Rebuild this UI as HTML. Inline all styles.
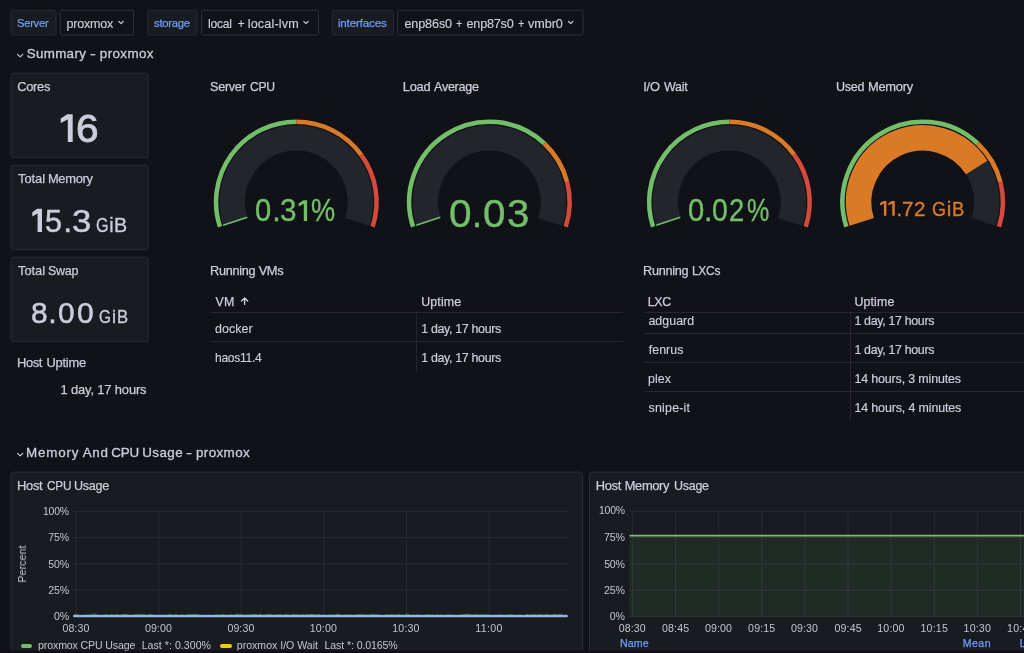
<!DOCTYPE html>
<html lang="en"><head><meta charset="utf-8"><title>Proxmox - Grafana</title>
<style>
html,body{margin:0;padding:0;}
html{width:1024px;height:653px;overflow:hidden;background:#111217;}
body{width:1024px;height:653px;overflow:hidden;background:#111217;position:relative;
 font-family:"Liberation Sans",sans-serif;color:#ccccdc;}
.t{position:absolute;white-space:pre;line-height:normal;margin:0;padding:0;transform-origin:0 0;}
.box{position:absolute;box-sizing:border-box;}
svg{position:absolute;left:0;top:0;}
.dash{position:absolute;height:3.6px;width:11.4px;border-radius:2px;}
#txt{position:absolute;left:0;top:0;width:1024px;height:653px;will-change:transform;overflow:hidden;}
.clipwrap{position:absolute;left:0;top:313px;width:1024px;height:340px;overflow:hidden;}
</style></head><body>
<svg width="1024" height="653" viewBox="0 0 1024 653">
<rect x="11.0" y="10.25" width="45.00" height="24.7" rx="1.6" fill="#181b1f" stroke="#282a30"/>
<rect x="60.2" y="10.25" width="73.20" height="24.7" rx="1.6" fill="#111217" stroke="#30323a"/>
<rect x="147.6" y="10.25" width="49.45" height="24.7" rx="1.6" fill="#181b1f" stroke="#282a30"/>
<rect x="201.65" y="10.25" width="116.70" height="24.7" rx="1.6" fill="#111217" stroke="#30323a"/>
<rect x="332.3" y="10.25" width="61.00" height="24.7" rx="1.6" fill="#181b1f" stroke="#282a30"/>
<rect x="397.6" y="10.25" width="185.30" height="24.7" rx="1.6" fill="#111217" stroke="#30323a"/>
<rect x="11.04" y="73.2" width="137.06" height="84.50" rx="2.5" fill="#181b1f" stroke="#2b2d34"/>
<rect x="11.04" y="165.2" width="137.06" height="84.50" rx="2.5" fill="#181b1f" stroke="#2b2d34"/>
<rect x="11.04" y="257.2" width="137.06" height="84.50" rx="2.5" fill="#181b1f" stroke="#2b2d34"/>
<rect x="11.04" y="472.1" width="571.36" height="227.90" rx="2.5" fill="#181b1f" stroke="#2b2d34"/>
<rect x="589.5" y="472.1" width="510.50" height="227.90" rx="2.5" fill="#181b1f" stroke="#2b2d34"/>
<path d="M210.5 312.45H622.8" stroke="#27292f" stroke-width="1"/>
<path d="M210.5 341.55H622.8" stroke="#27292f" stroke-width="1"/>
<path d="M416.4 312.45V370.9" stroke="#27292f" stroke-width="1"/>
<path d="M643.9 312.45H1024" stroke="#27292f" stroke-width="1"/>
<path d="M643.9 333.5H1024" stroke="#27292f" stroke-width="1"/>
<path d="M643.9 362.4H1024" stroke="#27292f" stroke-width="1"/>
<path d="M643.9 391.5H1024" stroke="#27292f" stroke-width="1"/>
<path d="M850.45 312.45V420.8" stroke="#27292f" stroke-width="1"/>
<path d="M235.34 221.81A64.10 64.10 0 1 1 357.26 221.81" stroke="#22252b" stroke-width="25.4" fill="none"/>
<path d="M247.23 217.30L223.12 225.29" stroke="#73bf69" stroke-width="1.5" fill="none"/>
<path d="M219.98 226.80A80.25 80.25 0 0 1 296.30 121.75" stroke="#73bf69" stroke-width="4.5" fill="none"/>
<path d="M296.30 121.75A80.25 80.25 0 0 1 361.22 154.83" stroke="#da7a27" stroke-width="4.5" fill="none"/>
<path d="M361.22 154.83A80.25 80.25 0 0 1 372.62 226.80" stroke="#d74a3b" stroke-width="4.5" fill="none"/>
<path d="M428.44 221.81A64.10 64.10 0 1 1 550.36 221.81" stroke="#22252b" stroke-width="25.4" fill="none"/>
<path d="M440.33 217.30L416.22 225.29" stroke="#73bf69" stroke-width="1.5" fill="none"/>
<path d="M413.08 226.80A80.25 80.25 0 0 1 544.33 143.50" stroke="#73bf69" stroke-width="4.5" fill="none"/>
<path d="M544.33 143.50A80.25 80.25 0 0 1 567.13 182.04" stroke="#da7a27" stroke-width="4.5" fill="none"/>
<path d="M567.13 182.04A80.25 80.25 0 0 1 565.72 226.80" stroke="#d74a3b" stroke-width="4.5" fill="none"/>
<path d="M668.44 221.81A64.10 64.10 0 1 1 790.36 221.81" stroke="#22252b" stroke-width="25.4" fill="none"/>
<path d="M680.33 217.30L656.22 225.29" stroke="#73bf69" stroke-width="1.5" fill="none"/>
<path d="M653.08 226.80A80.25 80.25 0 0 1 729.40 121.75" stroke="#73bf69" stroke-width="4.5" fill="none"/>
<path d="M729.40 121.75A80.25 80.25 0 0 1 794.32 154.83" stroke="#da7a27" stroke-width="4.5" fill="none"/>
<path d="M794.32 154.83A80.25 80.25 0 0 1 805.72 226.80" stroke="#d74a3b" stroke-width="4.5" fill="none"/>
<path d="M861.74 221.81A64.10 64.10 0 1 1 983.66 221.81" stroke="#22252b" stroke-width="25.4" fill="none"/>
<path d="M861.74 221.81A64.10 64.10 0 0 1 976.73 167.52" stroke="#da7a27" stroke-width="25.4" fill="none"/>
<path d="M846.38 226.80A80.25 80.25 0 0 1 977.63 143.50" stroke="#73bf69" stroke-width="4.5" fill="none"/>
<path d="M977.63 143.50A80.25 80.25 0 0 1 1000.43 182.04" stroke="#da7a27" stroke-width="4.5" fill="none"/>
<path d="M1000.43 182.04A80.25 80.25 0 0 1 999.02 226.80" stroke="#d74a3b" stroke-width="4.5" fill="none"/>
<path d="M73.4 511.3H568.0" stroke="#282b31" stroke-width="1"/>
<path d="M73.4 537.55H568.0" stroke="#282b31" stroke-width="1"/>
<path d="M73.4 563.8H568.0" stroke="#282b31" stroke-width="1"/>
<path d="M73.4 590.05H568.0" stroke="#282b31" stroke-width="1"/>
<path d="M73.4 616.3H568.0" stroke="#282b31" stroke-width="1"/>
<path d="M76.2 511.0V616.3" stroke="#282b31" stroke-width="1"/>
<path d="M158.8 511.0V616.3" stroke="#282b31" stroke-width="1"/>
<path d="M241.3 511.0V616.3" stroke="#282b31" stroke-width="1"/>
<path d="M323.9 511.0V616.3" stroke="#282b31" stroke-width="1"/>
<path d="M406.4 511.0V616.3" stroke="#282b31" stroke-width="1"/>
<path d="M489.0 511.0V616.3" stroke="#282b31" stroke-width="1"/>
<path d="M73.4 615.07 L75.5 614.84 L77.6 614.92 L79.7 615.26 L81.8 615.27 L83.9 615.25 L86.0 615.00 L88.1 615.21 L90.2 614.86 L92.3 614.90 L94.4 613.82 L96.5 614.70 L98.6 615.20 L100.7 615.08 L102.8 615.17 L104.9 614.85 L107.0 614.92 L109.1 615.26 L111.2 614.82 L113.3 615.08 L115.4 614.98 L117.5 614.74 L119.6 615.13 L121.7 614.93 L123.8 614.79 L125.9 614.61 L128.0 615.01 L130.1 615.19 L132.2 615.27 L134.3 614.76 L136.4 614.69 L138.5 614.81 L140.6 614.89 L142.7 614.71 L144.8 614.97 L146.9 615.26 L149.0 614.85 L151.1 614.72 L153.2 615.03 L155.3 615.28 L157.4 615.18 L159.5 615.26 L161.6 615.21 L163.7 615.03 L165.8 615.24 L167.9 614.92 L170.0 614.73 L172.1 615.11 L174.2 615.05 L176.3 614.63 L178.4 615.18 L180.5 615.14 L182.6 614.89 L184.7 615.30 L186.8 615.04 L188.9 614.63 L191.0 614.94 L193.1 614.83 L195.2 614.67 L197.3 614.69 L199.4 615.03 L201.5 615.23 L203.6 615.26 L205.7 615.15 L207.8 615.06 L209.9 615.30 L212.0 615.23 L214.1 615.28 L216.2 614.87 L218.3 615.12 L220.4 615.05 L222.5 614.71 L224.6 614.97 L226.7 615.24 L228.8 615.06 L230.9 614.72 L233.0 615.28 L235.1 614.93 L237.2 614.12 L239.3 614.93 L241.4 614.70 L243.5 615.12 L245.6 615.18 L247.7 614.93 L249.8 615.07 L251.9 614.73 L254.0 614.70 L256.1 614.73 L258.2 615.14 L260.3 614.25 L262.4 615.28 L264.5 615.12 L266.6 614.63 L268.7 614.64 L270.8 614.63 L272.9 615.15 L275.0 615.16 L277.1 614.86 L279.2 614.71 L281.3 614.84 L283.4 615.24 L285.5 614.66 L287.6 614.77 L289.7 615.18 L291.8 615.07 L293.9 614.62 L296.0 615.02 L298.1 614.79 L300.2 615.21 L302.3 614.67 L304.4 615.20 L306.5 614.61 L308.6 615.05 L310.7 614.41 L312.8 614.62 L314.9 614.93 L317.0 615.00 L319.1 614.72 L321.2 615.12 L323.3 615.13 L325.4 615.12 L327.5 615.21 L329.6 615.05 L331.7 614.89 L333.8 615.01 L335.9 614.95 L338.0 614.13 L340.1 614.99 L342.2 615.30 L344.3 615.18 L346.4 614.79 L348.5 615.07 L350.6 614.91 L352.7 615.23 L354.8 615.13 L356.9 614.76 L359.0 614.91 L361.1 614.66 L363.2 614.87 L365.3 614.94 L367.4 614.98 L369.5 614.97 L371.6 614.81 L373.7 614.64 L375.8 614.91 L377.9 614.71 L380.0 615.21 L382.1 615.25 L384.2 615.25 L386.3 614.75 L388.4 615.19 L390.5 614.84 L392.6 614.68 L394.7 615.15 L396.8 615.02 L398.9 614.61 L401.0 615.19 L403.1 614.94 L405.2 615.16 L407.3 613.99 L409.4 614.91 L411.5 615.29 L413.6 614.86 L415.7 615.25 L417.8 614.75 L419.9 615.23 L422.0 615.27 L424.1 615.11 L426.2 615.00 L428.3 614.73 L430.4 615.20 L432.5 614.90 L434.6 615.24 L436.7 614.82 L438.8 615.25 L440.9 614.86 L443.0 615.24 L445.1 615.25 L447.2 614.98 L449.3 614.91 L451.4 615.11 L453.5 614.93 L455.6 615.22 L457.7 615.26 L459.8 615.08 L461.9 614.77 L464.0 614.95 L466.1 614.26 L468.2 614.32 L470.3 614.79 L472.4 615.17 L474.5 614.65 L476.6 614.73 L478.7 614.95 L480.8 615.02 L482.9 614.82 L485.0 615.06 L487.1 614.81 L489.2 615.02 L491.3 615.26 L493.4 615.25 L495.5 615.12 L497.6 615.24 L499.7 614.69 L501.8 615.10 L503.9 615.09 L506.0 615.19 L508.1 615.12 L510.2 614.62 L512.3 615.13 L514.4 615.08 L516.5 615.30 L518.6 614.97 L520.7 615.16 L522.8 615.30 L524.9 615.24 L527.0 614.47 L529.1 615.09 L531.2 614.89 L533.3 614.77 L535.4 614.80 L537.5 615.03 L539.6 614.61 L541.7 614.79 L543.8 615.27 L545.9 614.68 L548.0 614.79 L550.1 615.20 L552.2 614.95 L554.3 614.74 L556.4 614.89 L558.5 614.82 L560.6 614.34 L562.7 615.21 L564.8 615.23 L566.9 614.91" stroke="#73bf69" stroke-width="1" stroke-opacity="0.75" fill="none"/>
<path d="M73.4 617.0H567.7" stroke="#b3a23a" stroke-width="1" stroke-opacity="0.6" fill="none"/>
<path d="M73.4 616.0H567.7" stroke="#8ab8f5" stroke-width="1.9" fill="none"/>
<path d="M629.5 511.3H1024" stroke="#282b31" stroke-width="1"/>
<path d="M629.5 537.6H1024" stroke="#282b31" stroke-width="1"/>
<path d="M629.5 563.9H1024" stroke="#282b31" stroke-width="1"/>
<path d="M629.5 590.25H1024" stroke="#282b31" stroke-width="1"/>
<path d="M629.5 616.6H1024" stroke="#282b31" stroke-width="1"/>
<path d="M632.4 511.0V616.7" stroke="#282b31" stroke-width="1"/>
<path d="M675.5 511.0V616.7" stroke="#282b31" stroke-width="1"/>
<path d="M718.65 511.0V616.7" stroke="#282b31" stroke-width="1"/>
<path d="M761.8 511.0V616.7" stroke="#282b31" stroke-width="1"/>
<path d="M804.9 511.0V616.7" stroke="#282b31" stroke-width="1"/>
<path d="M848.0 511.0V616.7" stroke="#282b31" stroke-width="1"/>
<path d="M891.15 511.0V616.7" stroke="#282b31" stroke-width="1"/>
<path d="M934.3 511.0V616.7" stroke="#282b31" stroke-width="1"/>
<path d="M977.4 511.0V616.7" stroke="#282b31" stroke-width="1"/>
<path d="M1020.5 511.0V616.7" stroke="#282b31" stroke-width="1"/>
<rect x="629.5" y="535.6" width="394.5" height="81.10000000000002" fill="#73bf69" fill-opacity="0.1"/>
<path d="M629.5 535.6H1024" stroke="#73bf69" stroke-width="1.6" fill="none"/>
<path d="M17.6 54.4L20.2 56.9L22.8 54.4" fill="none" stroke="#c4c4d4" stroke-width="1.25" stroke-linecap="round" stroke-linejoin="round"/>
<path d="M17.6 453.4L20.2 455.9L22.8 453.4" fill="none" stroke="#c4c4d4" stroke-width="1.25" stroke-linecap="round" stroke-linejoin="round"/>
<path d="M118.9 21.5L121.0 23.6L123.1 21.5" fill="none" stroke="#c4c4d4" stroke-width="1.25" stroke-linecap="round" stroke-linejoin="round"/>
<path d="M303.9 21.5L306.0 23.6L308.1 21.5" fill="none" stroke="#c4c4d4" stroke-width="1.25" stroke-linecap="round" stroke-linejoin="round"/>
<path d="M568.6 21.5L570.7 23.6L572.8000000000001 21.5" fill="none" stroke="#c4c4d4" stroke-width="1.25" stroke-linecap="round" stroke-linejoin="round"/>
<polygon points="67.80,114.30 72.70,114.30 72.70,142.05 67.80,142.05 67.80,119.51 60.70,123.12 60.70,118.46 67.24,114.30" fill="#ccccdc"/>
<polygon points="37.60,208.80 42.00,208.80 42.00,231.90 37.60,231.90 37.60,213.44 32.30,216.45 32.30,212.27 37.14,208.80" fill="#ccccdc"/>
<polygon points="303.80,200.30 307.10,200.30 307.10,221.00 303.80,221.00 303.80,203.85 298.60,206.54 298.60,203.41 303.39,200.30" fill="#73bf69"/>
<polygon points="883.90,200.90 886.40,200.90 886.40,215.70 883.90,215.70 883.90,203.57 880.05,205.50 880.05,203.12 883.60,200.90" fill="#da7a27"/>
<polygon points="892.25,200.90 894.75,200.90 894.75,215.70 892.25,215.70 892.25,203.57 888.45,205.50 888.45,203.12 891.95,200.90" fill="#da7a27"/>
<path d="M244.6 304.4V298.3M241.5 301.1L244.6 298.0L247.7 301.1" fill="none" stroke="#ccccdc" stroke-width="1.4" stroke-linecap="round" stroke-linejoin="round"/>
</svg>
<div class="dash" style="left:20.9px;top:644px;background:#73bf69"></div>
<div class="dash" style="left:220.4px;top:644px;background:#f2cc0c"></div>
<div id="txt">
<span class="t" style="left:17.45px;top:16.00px;font-size:11.6px;color:#6e9fff;letter-spacing:-0.255px;transform:scaleX(0.9609);-webkit-text-stroke:0.25px #6e9fff;">Server</span>
<span class="t" style="left:66.41px;top:17.00px;font-size:12.6px;color:#ccccdc;letter-spacing:-0.221px;-webkit-text-stroke:0.15px #ccccdc;">proxmox</span>
<span class="t" style="left:154.32px;top:16.00px;font-size:11.6px;color:#6e9fff;letter-spacing:-0.255px;transform:scaleX(0.9724);-webkit-text-stroke:0.25px #6e9fff;">storage</span>
<span class="t" style="left:207.94px;top:17.00px;font-size:12.6px;color:#ccccdc;letter-spacing:-0.277px;transform:scaleX(0.9618);-webkit-text-stroke:0.15px #ccccdc;">local</span>
<span class="t" style="left:237.41px;top:17.00px;font-size:12.6px;color:#ccccdc;transform:scaleX(1.0000);-webkit-text-stroke:0.15px #ccccdc;">+</span>
<span class="t" style="left:247.71px;top:17.00px;font-size:12.6px;color:#ccccdc;letter-spacing:0.179px;-webkit-text-stroke:0.15px #ccccdc;">local-lvm</span>
<span class="t" style="left:337.88px;top:16.00px;font-size:11.6px;color:#6e9fff;letter-spacing:-0.156px;-webkit-text-stroke:0.25px #6e9fff;">interfaces</span>
<span class="t" style="left:404.41px;top:17.00px;font-size:12.6px;color:#ccccdc;letter-spacing:-0.106px;-webkit-text-stroke:0.15px #ccccdc;">enp86s0</span>
<span class="t" style="left:456.39px;top:17.00px;font-size:12.6px;color:#ccccdc;transform:scaleX(0.8571);-webkit-text-stroke:0.15px #ccccdc;">+</span>
<span class="t" style="left:466.51px;top:17.00px;font-size:12.6px;color:#ccccdc;letter-spacing:-0.190px;-webkit-text-stroke:0.15px #ccccdc;">enp87s0</span>
<span class="t" style="left:517.98px;top:17.00px;font-size:12.6px;color:#ccccdc;transform:scaleX(0.8730);-webkit-text-stroke:0.15px #ccccdc;">+</span>
<span class="t" style="left:528.10px;top:17.00px;font-size:12.6px;color:#ccccdc;letter-spacing:-0.073px;-webkit-text-stroke:0.15px #ccccdc;">vmbr0</span>
<span class="t" style="left:26.68px;top:46.00px;font-size:13.4px;color:#ccccdc;letter-spacing:0.315px;-webkit-text-stroke:0.3px #ccccdc;">Summary</span>
<span class="t" style="left:90.20px;top:46.00px;font-size:13.4px;color:#ccccdc;transform:scaleX(1.3064);-webkit-text-stroke:0.3px #ccccdc;">-</span>
<span class="t" style="left:99.81px;top:46.00px;font-size:13.4px;color:#ccccdc;letter-spacing:0.401px;-webkit-text-stroke:0.3px #ccccdc;">proxmox</span>
<span class="t" style="left:26.05px;top:445.00px;font-size:13.4px;color:#ccccdc;letter-spacing:0.791px;-webkit-text-stroke:0.3px #ccccdc;">Memory</span>
<span class="t" style="left:82.75px;top:445.00px;font-size:13.4px;color:#ccccdc;letter-spacing:0.680px;-webkit-text-stroke:0.3px #ccccdc;">And</span>
<span class="t" style="left:111.37px;top:445.00px;font-size:13.4px;color:#ccccdc;letter-spacing:-0.290px;-webkit-text-stroke:0.3px #ccccdc;">CPU</span>
<span class="t" style="left:142.16px;top:445.00px;font-size:13.4px;color:#ccccdc;letter-spacing:0.437px;-webkit-text-stroke:0.3px #ccccdc;">Usage</span>
<span class="t" style="left:186.14px;top:445.00px;font-size:13.4px;color:#ccccdc;transform:scaleX(1.3486);-webkit-text-stroke:0.3px #ccccdc;">-</span>
<span class="t" style="left:195.96px;top:445.00px;font-size:13.4px;color:#ccccdc;letter-spacing:0.401px;-webkit-text-stroke:0.3px #ccccdc;">proxmox</span>
<span class="t" style="left:17.20px;top:79.00px;font-size:12.9px;color:#ccccdc;letter-spacing:-0.301px;-webkit-text-stroke:0.25px #ccccdc;">Cores</span>
<span class="t" style="left:18.00px;top:171.00px;font-size:12.9px;color:#ccccdc;letter-spacing:-0.049px;-webkit-text-stroke:0.25px #ccccdc;">Total</span>
<span class="t" style="left:47.89px;top:171.00px;font-size:12.9px;color:#ccccdc;letter-spacing:-0.296px;-webkit-text-stroke:0.25px #ccccdc;">Memory</span>
<span class="t" style="left:18.00px;top:263.00px;font-size:12.9px;color:#ccccdc;letter-spacing:-0.049px;-webkit-text-stroke:0.25px #ccccdc;">Total</span>
<span class="t" style="left:48.21px;top:263.00px;font-size:12.9px;color:#ccccdc;letter-spacing:-0.284px;transform:scaleX(0.9708);-webkit-text-stroke:0.25px #ccccdc;">Swap</span>
<span class="t" style="left:17.04px;top:355.00px;font-size:12.9px;color:#ccccdc;letter-spacing:-0.370px;-webkit-text-stroke:0.25px #ccccdc;">Host</span>
<span class="t" style="left:46.54px;top:355.00px;font-size:12.9px;color:#ccccdc;letter-spacing:-0.256px;-webkit-text-stroke:0.25px #ccccdc;">Uptime</span>
<span class="t" style="left:210.36px;top:79.00px;font-size:12.9px;color:#ccccdc;letter-spacing:-0.284px;transform:scaleX(0.9790);-webkit-text-stroke:0.25px #ccccdc;">Server</span>
<span class="t" style="left:250.03px;top:79.00px;font-size:12.9px;color:#ccccdc;letter-spacing:-0.284px;transform:scaleX(0.9439);-webkit-text-stroke:0.25px #ccccdc;">CPU</span>
<span class="t" style="left:402.79px;top:79.00px;font-size:12.9px;color:#ccccdc;letter-spacing:-0.255px;-webkit-text-stroke:0.25px #ccccdc;">Load</span>
<span class="t" style="left:434.30px;top:79.00px;font-size:12.9px;color:#ccccdc;letter-spacing:-0.284px;transform:scaleX(0.9761);-webkit-text-stroke:0.25px #ccccdc;">Average</span>
<span class="t" style="left:643.19px;top:79.00px;font-size:12.9px;color:#ccccdc;letter-spacing:-0.217px;-webkit-text-stroke:0.25px #ccccdc;">I/O</span>
<span class="t" style="left:663.60px;top:79.00px;font-size:12.9px;color:#ccccdc;letter-spacing:-0.284px;transform:scaleX(0.9668);-webkit-text-stroke:0.25px #ccccdc;">Wait</span>
<span class="t" style="left:836.42px;top:79.00px;font-size:12.9px;color:#ccccdc;letter-spacing:-0.284px;transform:scaleX(0.9736);-webkit-text-stroke:0.25px #ccccdc;">Used</span>
<span class="t" style="left:867.99px;top:79.00px;font-size:12.9px;color:#ccccdc;letter-spacing:-0.276px;-webkit-text-stroke:0.25px #ccccdc;">Memory</span>
<span class="t" style="left:209.81px;top:263.00px;font-size:12.9px;color:#ccccdc;letter-spacing:-0.284px;transform:scaleX(0.9850);-webkit-text-stroke:0.25px #ccccdc;">Running</span>
<span class="t" style="left:258.65px;top:263.00px;font-size:12.9px;color:#ccccdc;letter-spacing:-0.373px;-webkit-text-stroke:0.25px #ccccdc;">VMs</span>
<span class="t" style="left:643.31px;top:263.00px;font-size:12.9px;color:#ccccdc;letter-spacing:-0.284px;transform:scaleX(0.9850);-webkit-text-stroke:0.25px #ccccdc;">Running</span>
<span class="t" style="left:692.17px;top:263.00px;font-size:12.9px;color:#ccccdc;letter-spacing:-0.284px;transform:scaleX(0.9255);-webkit-text-stroke:0.25px #ccccdc;">LXCs</span>
<span class="t" style="left:17.09px;top:478.00px;font-size:12.9px;color:#ccccdc;letter-spacing:-0.320px;-webkit-text-stroke:0.25px #ccccdc;">Host</span>
<span class="t" style="left:46.55px;top:478.00px;font-size:12.9px;color:#ccccdc;letter-spacing:-0.284px;transform:scaleX(0.9162);-webkit-text-stroke:0.25px #ccccdc;">CPU</span>
<span class="t" style="left:73.51px;top:478.00px;font-size:12.9px;color:#ccccdc;letter-spacing:-0.284px;transform:scaleX(0.9763);-webkit-text-stroke:0.25px #ccccdc;">Usage</span>
<span class="t" style="left:595.79px;top:478.00px;font-size:12.9px;color:#ccccdc;letter-spacing:-0.320px;-webkit-text-stroke:0.25px #ccccdc;">Host</span>
<span class="t" style="left:624.74px;top:478.00px;font-size:12.9px;color:#ccccdc;letter-spacing:-0.366px;-webkit-text-stroke:0.25px #ccccdc;">Memory</span>
<span class="t" style="left:673.52px;top:478.00px;font-size:12.9px;color:#ccccdc;letter-spacing:-0.284px;transform:scaleX(0.9706);-webkit-text-stroke:0.25px #ccccdc;">Usage</span>
<span class="t" style="left:76.06px;top:107.00px;font-size:39.0px;color:#ccccdc;transform:scaleX(1.0427);-webkit-text-stroke:0.9px #ccccdc;">6</span>
<span class="t" style="left:45.29px;top:203.00px;font-size:31.8px;color:#ccccdc;transform:scaleX(0.9589);-webkit-text-stroke:0.5px #ccccdc;">5</span>
<span class="t" style="left:63.23px;top:203.00px;font-size:31.8px;color:#ccccdc;-webkit-text-stroke:0.5px #ccccdc;">.</span>
<span class="t" style="left:71.89px;top:203.00px;font-size:31.8px;color:#ccccdc;transform:scaleX(1.0878);-webkit-text-stroke:0.5px #ccccdc;">3</span>
<span class="t" style="left:95.99px;top:214.00px;font-size:19.7px;color:#ccccdc;transform:scaleX(0.8200);-webkit-text-stroke:0.3px #ccccdc;">G</span>
<span class="t" style="left:109.25px;top:214.00px;font-size:19.7px;color:#ccccdc;-webkit-text-stroke:0.3px #ccccdc;">i</span>
<span class="t" style="left:114.11px;top:214.00px;font-size:19.7px;color:#ccccdc;transform:scaleX(1.0024);-webkit-text-stroke:0.3px #ccccdc;">B</span>
<span class="t" style="left:30.71px;top:295.00px;font-size:30.4px;color:#ccccdc;transform:scaleX(0.9852);-webkit-text-stroke:0.5px #ccccdc;">8</span>
<span class="t" style="left:48.36px;top:295.00px;font-size:30.4px;color:#ccccdc;-webkit-text-stroke:0.5px #ccccdc;">.</span>
<span class="t" style="left:58.01px;top:295.00px;font-size:30.4px;color:#ccccdc;transform:scaleX(0.9809);-webkit-text-stroke:0.5px #ccccdc;">0</span>
<span class="t" style="left:76.71px;top:295.00px;font-size:30.4px;color:#ccccdc;transform:scaleX(0.9873);-webkit-text-stroke:0.5px #ccccdc;">0</span>
<span class="t" style="left:99.11px;top:306.00px;font-size:18.4px;color:#ccccdc;transform:scaleX(0.8323);-webkit-text-stroke:0.3px #ccccdc;">G</span>
<span class="t" style="left:112.09px;top:306.00px;font-size:18.4px;color:#ccccdc;-webkit-text-stroke:0.3px #ccccdc;">i</span>
<span class="t" style="left:117.03px;top:306.00px;font-size:18.4px;color:#ccccdc;transform:scaleX(0.9071);-webkit-text-stroke:0.3px #ccccdc;">B</span>
<span class="t" style="left:60.49px;top:382.00px;font-size:12.9px;color:#ccccdc;letter-spacing:-0.133px;-webkit-text-stroke:0.25px #ccccdc;">1 day, 17 hours</span>
<span class="t" style="left:255.26px;top:193.00px;font-size:30.5px;color:#73bf69;transform:scaleX(0.9551);-webkit-text-stroke:0.35px #73bf69;">0</span>
<span class="t" style="left:272.20px;top:193.00px;font-size:30.5px;color:#73bf69;-webkit-text-stroke:0.35px #73bf69;">.</span>
<span class="t" style="left:280.44px;top:193.00px;font-size:30.5px;color:#73bf69;transform:scaleX(0.9720);-webkit-text-stroke:0.35px #73bf69;">3</span>
<span class="t" style="left:311.31px;top:193.00px;font-size:30.5px;color:#73bf69;transform:scaleX(0.8904);-webkit-text-stroke:0.35px #73bf69;">%</span>
<span class="t" style="left:448.72px;top:193.00px;font-size:38.0px;color:#73bf69;transform:scaleX(1.0698);-webkit-text-stroke:0.35px #73bf69;">0</span>
<span class="t" style="left:471.85px;top:193.00px;font-size:38.0px;color:#73bf69;-webkit-text-stroke:0.35px #73bf69;">.</span>
<span class="t" style="left:482.67px;top:193.00px;font-size:38.0px;color:#73bf69;transform:scaleX(1.0620);-webkit-text-stroke:0.35px #73bf69;">0</span>
<span class="t" style="left:506.83px;top:193.00px;font-size:38.0px;color:#73bf69;transform:scaleX(1.0556);-webkit-text-stroke:0.35px #73bf69;">3</span>
<span class="t" style="left:688.10px;top:193.00px;font-size:30.5px;color:#73bf69;transform:scaleX(0.9583);-webkit-text-stroke:0.35px #73bf69;">0</span>
<span class="t" style="left:704.05px;top:193.00px;font-size:30.5px;color:#73bf69;-webkit-text-stroke:0.35px #73bf69;">.</span>
<span class="t" style="left:712.03px;top:193.00px;font-size:30.5px;color:#73bf69;transform:scaleX(0.9295);-webkit-text-stroke:0.35px #73bf69;">0</span>
<span class="t" style="left:728.77px;top:193.00px;font-size:30.5px;color:#73bf69;transform:scaleX(0.9012);-webkit-text-stroke:0.35px #73bf69;">2</span>
<span class="t" style="left:746.86px;top:193.00px;font-size:30.5px;color:#73bf69;transform:scaleX(0.8220);-webkit-text-stroke:0.35px #73bf69;">%</span>
<span class="t" style="left:896.50px;top:197.00px;font-size:20.7px;color:#da7a27;-webkit-text-stroke:0.35px #da7a27;">.</span>
<span class="t" style="left:902.31px;top:197.00px;font-size:20.7px;color:#da7a27;transform:scaleX(0.9947);-webkit-text-stroke:0.35px #da7a27;">7</span>
<span class="t" style="left:914.01px;top:197.00px;font-size:20.7px;color:#da7a27;transform:scaleX(0.9947);-webkit-text-stroke:0.35px #da7a27;">2</span>
<span class="t" style="left:931.71px;top:197.00px;font-size:20.7px;color:#da7a27;transform:scaleX(0.8684);-webkit-text-stroke:0.35px #da7a27;">G</span>
<span class="t" style="left:946.84px;top:197.00px;font-size:20.7px;color:#da7a27;-webkit-text-stroke:0.35px #da7a27;">i</span>
<span class="t" style="left:952.02px;top:197.00px;font-size:20.7px;color:#da7a27;transform:scaleX(0.8869);-webkit-text-stroke:0.35px #da7a27;">B</span>
<span class="t" style="left:215.50px;top:295.00px;font-size:12.4px;color:#ccccdc;letter-spacing:0.236px;-webkit-text-stroke:0.25px #ccccdc;">VM</span>
<span class="t" style="left:421.23px;top:295.00px;font-size:12.4px;color:#ccccdc;letter-spacing:0.140px;-webkit-text-stroke:0.25px #ccccdc;">Uptime</span>
<span class="t" style="left:215.11px;top:322.00px;font-size:12.4px;color:#ccccdc;letter-spacing:0.046px;-webkit-text-stroke:0.15px #ccccdc;">docker</span>
<span class="t" style="left:214.75px;top:351.00px;font-size:12.4px;color:#ccccdc;letter-spacing:-0.273px;transform:scaleX(0.9711);-webkit-text-stroke:0.15px #ccccdc;">haos11.4</span>
<span class="t" style="left:421.23px;top:322.00px;font-size:12.4px;color:#ccccdc;letter-spacing:-0.321px;-webkit-text-stroke:0.2px #ccccdc;">1 day, 17 hours</span>
<span class="t" style="left:421.23px;top:351.00px;font-size:12.4px;color:#ccccdc;letter-spacing:-0.321px;-webkit-text-stroke:0.2px #ccccdc;">1 day, 17 hours</span>
<span class="t" style="left:647.83px;top:295.00px;font-size:12.4px;color:#ccccdc;letter-spacing:-0.387px;-webkit-text-stroke:0.25px #ccccdc;">LXC</span>
<span class="t" style="left:854.43px;top:295.00px;font-size:12.4px;color:#ccccdc;letter-spacing:0.140px;-webkit-text-stroke:0.25px #ccccdc;">Uptime</span>
<span class="t" style="left:648.80px;top:343.00px;font-size:12.4px;color:#ccccdc;letter-spacing:0.025px;-webkit-text-stroke:0.15px #ccccdc;">fenrus</span>
<span class="t" style="left:854.43px;top:343.00px;font-size:12.4px;color:#ccccdc;letter-spacing:-0.321px;-webkit-text-stroke:0.2px #ccccdc;">1 day, 17 hours</span>
<span class="t" style="left:648.02px;top:372.00px;font-size:12.4px;color:#ccccdc;letter-spacing:0.076px;-webkit-text-stroke:0.15px #ccccdc;">plex</span>
<span class="t" style="left:854.43px;top:372.00px;font-size:12.4px;color:#ccccdc;letter-spacing:-0.125px;-webkit-text-stroke:0.2px #ccccdc;">14 hours, 3 minutes</span>
<span class="t" style="left:648.61px;top:401.00px;font-size:12.4px;color:#ccccdc;letter-spacing:0.197px;-webkit-text-stroke:0.15px #ccccdc;">snipe-it</span>
<span class="t" style="left:854.43px;top:401.00px;font-size:12.4px;color:#ccccdc;letter-spacing:-0.108px;-webkit-text-stroke:0.2px #ccccdc;">14 hours, 4 minutes</span>
<span class="t" style="left:43.15px;top:505.00px;font-size:10.6px;color:#c3c4d2;letter-spacing:-0.233px;transform:scaleX(0.9830);">100%</span>
<span class="t" style="left:48.20px;top:531.00px;font-size:10.6px;color:#c3c4d2;letter-spacing:-0.151px;">75%</span>
<span class="t" style="left:48.37px;top:558.00px;font-size:10.6px;color:#c3c4d2;letter-spacing:-0.234px;">50%</span>
<span class="t" style="left:48.20px;top:584.00px;font-size:10.6px;color:#c3c4d2;letter-spacing:-0.151px;">25%</span>
<span class="t" style="left:54.07px;top:610.00px;font-size:10.6px;color:#c3c4d2;letter-spacing:-0.273px;">0%</span>
<span class="t" style="left:62.42px;top:622.00px;font-size:10.6px;color:#c3c4d2;letter-spacing:0.092px;">08:30</span>
<span class="t" style="left:144.92px;top:622.00px;font-size:10.6px;color:#c3c4d2;letter-spacing:0.092px;">09:00</span>
<span class="t" style="left:227.42px;top:622.00px;font-size:10.6px;color:#c3c4d2;letter-spacing:0.092px;">09:30</span>
<span class="t" style="left:309.69px;top:622.00px;font-size:10.6px;color:#c3c4d2;letter-spacing:0.175px;">10:00</span>
<span class="t" style="left:392.29px;top:622.00px;font-size:10.6px;color:#c3c4d2;letter-spacing:0.175px;">10:30</span>
<span class="t" style="left:475.19px;top:622.00px;font-size:10.6px;color:#c3c4d2;letter-spacing:0.372px;">11:00</span>
<span class="t" style="left:38.09px;top:639.00px;font-size:10.6px;color:#c3c4d2;letter-spacing:-0.138px;">proxmox CPU Usage</span>
<span class="t" style="left:141.67px;top:639.00px;font-size:10.6px;color:#c3c4d2;letter-spacing:0.034px;">Last *: 0.300%</span>
<span class="t" style="left:236.84px;top:639.00px;font-size:10.6px;color:#c3c4d2;letter-spacing:-0.023px;">proxmox I/O Wait</span>
<span class="t" style="left:324.57px;top:639.00px;font-size:10.6px;color:#c3c4d2;letter-spacing:-0.114px;">Last *: 0.0165%</span>
<span class="t" style="left:598.95px;top:504.00px;font-size:10.6px;color:#c3c4d2;letter-spacing:-0.233px;transform:scaleX(0.9830);">100%</span>
<span class="t" style="left:604.00px;top:531.00px;font-size:10.6px;color:#c3c4d2;letter-spacing:-0.151px;">75%</span>
<span class="t" style="left:604.17px;top:558.00px;font-size:10.6px;color:#c3c4d2;letter-spacing:-0.234px;">50%</span>
<span class="t" style="left:604.00px;top:584.00px;font-size:10.6px;color:#c3c4d2;letter-spacing:-0.151px;">25%</span>
<span class="t" style="left:609.87px;top:610.00px;font-size:10.6px;color:#c3c4d2;letter-spacing:-0.273px;">0%</span>
<span class="t" style="left:618.82px;top:622.00px;font-size:10.6px;color:#c3c4d2;letter-spacing:0.092px;">08:30</span>
<span class="t" style="left:662.02px;top:622.00px;font-size:10.6px;color:#c3c4d2;letter-spacing:0.134px;">08:45</span>
<span class="t" style="left:705.02px;top:622.00px;font-size:10.6px;color:#c3c4d2;letter-spacing:0.092px;">09:00</span>
<span class="t" style="left:748.12px;top:622.00px;font-size:10.6px;color:#c3c4d2;letter-spacing:0.134px;">09:15</span>
<span class="t" style="left:791.12px;top:622.00px;font-size:10.6px;color:#c3c4d2;letter-spacing:0.092px;">09:30</span>
<span class="t" style="left:834.52px;top:622.00px;font-size:10.6px;color:#c3c4d2;letter-spacing:0.134px;">09:45</span>
<span class="t" style="left:877.29px;top:622.00px;font-size:10.6px;color:#c3c4d2;letter-spacing:0.175px;">10:00</span>
<span class="t" style="left:920.49px;top:622.00px;font-size:10.6px;color:#c3c4d2;letter-spacing:0.217px;">10:15</span>
<span class="t" style="left:963.59px;top:622.00px;font-size:10.6px;color:#c3c4d2;letter-spacing:0.175px;">10:30</span>
<span class="t" style="left:1007.09px;top:622.00px;font-size:10.6px;color:#c3c4d2;letter-spacing:0.217px;">10:45</span>
<span class="t" style="left:620.07px;top:637.00px;font-size:10.6px;color:#6e9fff;letter-spacing:0.094px;-webkit-text-stroke:0.25px #6e9fff;">Name</span>
<span class="t" style="left:962.67px;top:637.00px;font-size:10.6px;color:#6e9fff;letter-spacing:0.469px;-webkit-text-stroke:0.25px #6e9fff;">Mean</span>
<span class="t" style="left:1019.77px;top:637.00px;font-size:10.6px;color:#6e9fff;letter-spacing:0.385px;-webkit-text-stroke:0.25px #6e9fff;">Last</span>
<div class="clipwrap">
<span class="t clip" style="left:648.41px;top:1.00px;font-size:12.4px;color:#ccccdc;letter-spacing:0.046px;-webkit-text-stroke:0.15px #ccccdc;">adguard</span>
<span class="t clip" style="left:854.43px;top:1.00px;font-size:12.4px;color:#ccccdc;letter-spacing:-0.321px;-webkit-text-stroke:0.2px #ccccdc;">1 day, 17 hours</span>
</div>
</div>
<span class="t" style="left:22.3px;top:563.8px;font-size:10.6px;color:#c3c4d2;transform-origin:50% 50%;transform:translate(-50%,-50%) rotate(-90deg);letter-spacing:0.1px">Percent</span>
<div class="box" style="left:0;top:650px;width:1024px;height:1px;background:rgba(16,14,21,0.3)"></div>
<div class="box" style="left:0;top:651px;width:1024px;height:2px;background:#100e15"></div>
</body></html>
